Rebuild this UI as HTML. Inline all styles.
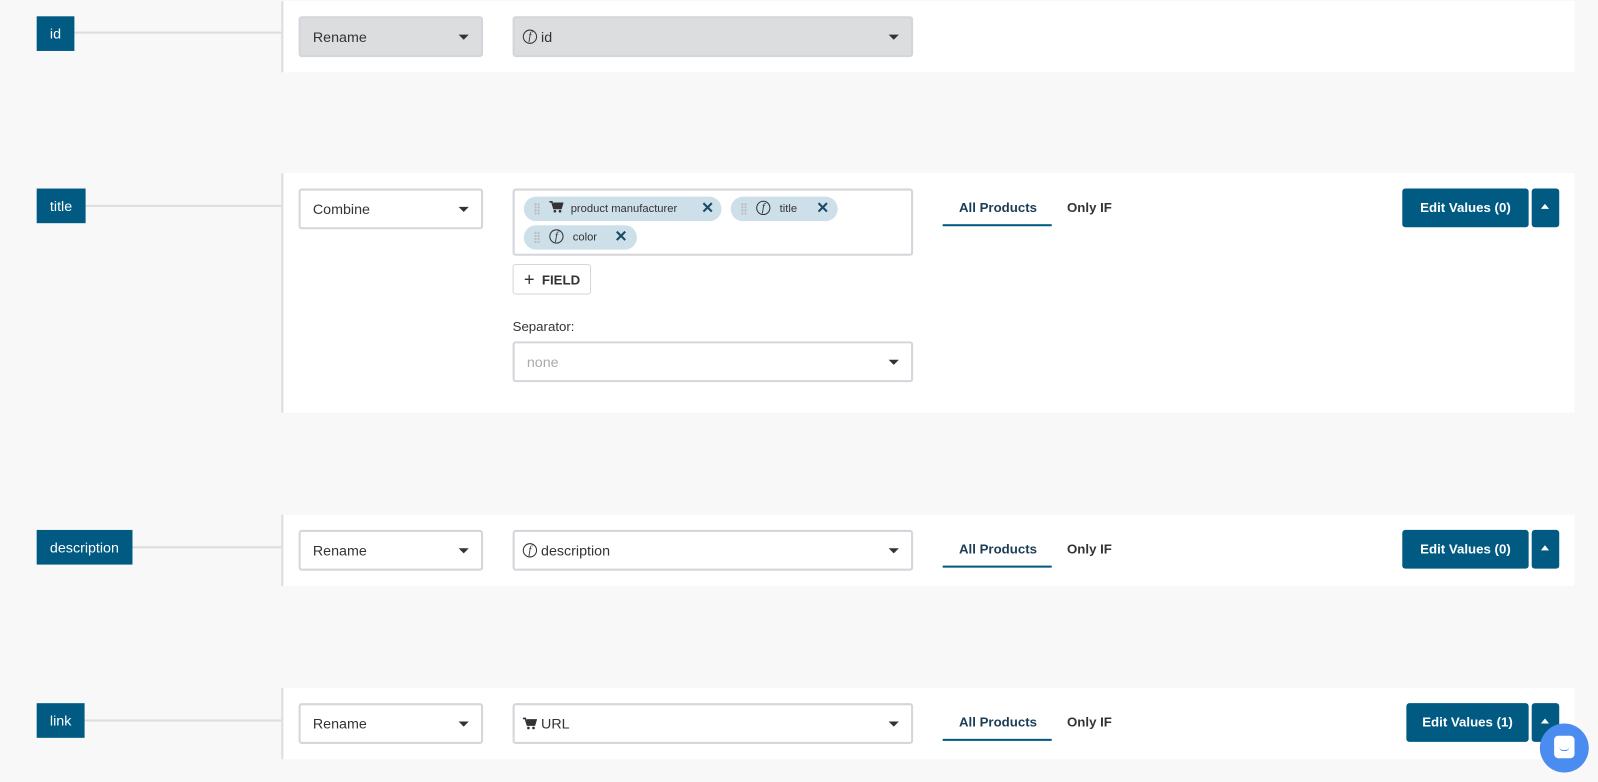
<!DOCTYPE html>
<html><head><style>
*{box-sizing:border-box;margin:0;padding:0}
body{width:1598px;height:782px;background:#f8f8f8;font-family:"Liberation Sans",sans-serif;overflow:hidden;color:#333}
#w{position:absolute;left:0;top:0;width:1568px;height:767px;transform:scale(1.0191);transform-origin:0 0}
.a{position:absolute}
.panel{position:absolute;left:276px;width:1269px;background:#fff;border-left:2px solid #ddd}
.lbl{position:absolute;left:36px;background:#005a82;color:#fff;font-size:14px;height:34px;line-height:34px;padding:0 13px}
.line{position:absolute;height:2px;background:#ddd}
.dd{position:absolute;height:40px;border:2px solid #d3d6db;border-radius:3px;background:#fff;font-size:14px;line-height:36px;padding-left:12px;color:#333}
.dd.g{background:#dcdddf}
.dd:after{content:"";position:absolute;right:12px;top:16px;border-left:5px solid transparent;border-right:5px solid transparent;border-top:5px solid #333}
.tab{position:absolute;font-size:13px;font-weight:bold;color:#333}
.ev{position:absolute;background:#005a82;color:#fff;font-weight:bold;font-size:13px;border-radius:3px;text-align:center;height:38px;line-height:38px}
.up{position:absolute;width:27px;height:38px;background:#005a82;border-radius:3px}
.up:after{content:"";position:absolute;left:9px;top:15px;border-left:4px solid transparent;border-right:4px solid transparent;border-bottom:5px solid #fff}
.chip{position:absolute;height:24px;background:#cde0ea;border-radius:12px;font-size:11px;line-height:24px;color:#333}
.f{display:inline-block;width:14px;height:14px;border:1px solid #333;border-radius:50%;font-style:italic;font-family:"Liberation Serif",serif;font-size:11px;line-height:12px;text-align:center;vertical-align:middle;margin-top:-2px}
.grip{position:absolute;left:10px;top:6px;width:6px;height:12px;background-image:radial-gradient(#bbb 1px,transparent 1.2px);background-size:3px 3px}
.x{position:absolute;font-size:15px;font-weight:bold;color:#1c4966}
.cart{display:inline-block;vertical-align:middle;margin-top:-2px}
</style></head><body><div id="w">
<svg width="0" height="0" style="position:absolute"><defs><symbol id="c" viewBox="0 0 14 12"><path d="M0 1h2.5l2 6.5h7l1.5-5H4" fill="none" stroke="#333" stroke-width="1.6"/><path d="M3.5 3h9.5l-1.6 4.5H4.8z" fill="#333"/><circle cx="5.5" cy="10.3" r="1.3" fill="#333"/><circle cx="10.5" cy="10.3" r="1.3" fill="#333"/></symbol></defs></svg>

<div class="panel" style="top:1px;height:70px"></div>
<div class="line" style="left:73px;width:203px;top:31px"></div>
<div class="lbl" style="top:16px">id</div>
<div class="dd g" style="left:293px;top:16px;width:181px">Rename</div>
<div class="dd g" style="left:503px;top:16px;width:393px;padding-left:8px"><span class="f">f</span> id</div>

<div class="panel" style="top:170px;height:235px"></div>
<div class="line" style="left:84px;width:192px;top:201px"></div>
<div class="lbl" style="top:185px">title</div>
<div class="dd" style="left:293px;top:185px;width:181px">Combine</div>
<div class="a" style="left:503px;top:185px;width:393px;height:66px;border:2px solid #d3d6db;border-radius:3px"></div>
<div class="chip" style="left:514px;top:193px;width:194px"><span class="grip"></span><svg class="cart" style="position:absolute;left:25px;top:6px" width="14" height="12"><use href="#c"/></svg><span style="position:absolute;left:46px">product manufacturer</span><span class="x" style="left:174px">✕</span></div>
<div class="chip" style="left:717px;top:193px;width:105px"><span class="grip"></span><span style="position:absolute;left:25px"><span class="f">f</span></span><span style="position:absolute;left:48px">title</span><span class="x" style="left:84px">✕</span></div>
<div class="chip" style="left:514px;top:221px;width:111px"><span class="grip"></span><span style="position:absolute;left:25px"><span class="f">f</span></span><span style="position:absolute;left:48px">color</span><span class="x" style="left:89px">✕</span></div>
<div class="a" style="left:503px;top:259px;width:77px;height:30px;border:1px solid #d3d6db;border-radius:3px;font-size:13px;font-weight:bold;line-height:28px;padding-left:10px;color:#333"><span style="font-size:18px;font-weight:normal;vertical-align:-1px">+</span>&nbsp; FIELD</div>
<div class="a" style="left:503px;top:313px;font-size:13px;color:#333">Separator:</div>
<div class="dd" style="left:503px;top:335px;width:393px;color:#aaa">none</div>
<div class="tab" style="left:941px;top:196px;color:#1c3d55">All Products</div>
<div class="a" style="left:925px;top:220px;width:107px;height:2px;background:#005a82"></div>
<div class="tab" style="left:1047px;top:196px">Only IF</div>
<div class="ev" style="left:1376px;top:185px;width:124px">Edit Values (0)</div>
<div class="up" style="left:1503px;top:185px"></div>

<div class="panel" style="top:505px;height:70px"></div>
<div class="line" style="left:128px;width:148px;top:536px"></div>
<div class="lbl" style="top:520px">description</div>
<div class="dd" style="left:293px;top:520px;width:181px">Rename</div>
<div class="dd" style="left:503px;top:520px;width:393px;padding-left:8px"><span class="f">f</span> description</div>
<div class="tab" style="left:941px;top:531px;color:#1c3d55">All Products</div>
<div class="a" style="left:925px;top:555px;width:107px;height:2px;background:#005a82"></div>
<div class="tab" style="left:1047px;top:531px">Only IF</div>
<div class="ev" style="left:1376px;top:520px;width:124px">Edit Values (0)</div>
<div class="up" style="left:1503px;top:520px"></div>

<div class="panel" style="top:675px;height:70px"></div>
<div class="line" style="left:82px;width:194px;top:706px"></div>
<div class="lbl" style="top:690px">link</div>
<div class="dd" style="left:293px;top:690px;width:181px">Rename</div>
<div class="dd" style="left:503px;top:690px;width:393px;padding-left:8px"><svg class="cart" width="14" height="12"><use href="#c"/></svg> URL</div>
<div class="tab" style="left:941px;top:701px;color:#1c3d55">All Products</div>
<div class="a" style="left:925px;top:725px;width:107px;height:2px;background:#005a82"></div>
<div class="tab" style="left:1047px;top:701px">Only IF</div>
<div class="ev" style="left:1380px;top:690px;width:120px">Edit Values (1)</div>
<div class="up" style="left:1503px;top:690px"></div>

<div class="a" style="left:1511px;top:710px;width:48px;height:48px;border-radius:50%;background:#4a8cf0"></div>
<div class="a" style="left:1525px;top:722px;width:20px;height:22px;border-radius:4px;background:#fff"></div>
<div class="a" style="left:1530px;top:733px;width:10px;height:4px;border-bottom:1.5px solid #4a8cf0;border-radius:0 0 6px 6px"></div>
</div></body></html>
